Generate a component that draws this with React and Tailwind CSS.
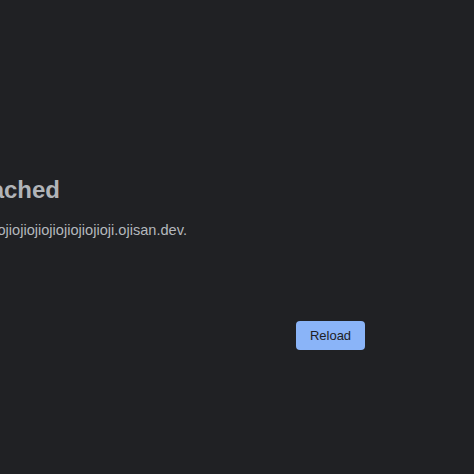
export default function App() {
  return (
    <div
      className="h-screen w-full overflow-hidden bg-[#202124]"
      style={{ fontFamily: '"Liberation Sans", Arial, sans-serif' }}
    >
      <div className="flex flex-col pt-[176px]">
        {/* heading, right end pinned so the start runs off the left edge */}
        <div className="flex w-[60px] justify-end">
          <h1 className="shrink-0 whitespace-nowrap text-[24px] leading-[28px] font-bold text-[#b1b4b8]">
            This site can’t be reached
          </h1>
        </div>

        <div className="mt-[16px] flex w-[187px] justify-end">
          <p className="shrink-0 whitespace-nowrap text-[14.6px] leading-[20px] text-[#b4b8bd]">
            Check if there is a typo in ojiojiojiojiojiojiojiojiojioji.ojisan.dev.
          </p>
        </div>

        <div className="mt-[81px] pl-[296px]">
          <button className="h-[29px] w-[69px] rounded-[4px] bg-[#8ab4f8] text-[13px] text-[#202124]">
            Reload
          </button>
        </div>
      </div>
    </div>
  );
}
